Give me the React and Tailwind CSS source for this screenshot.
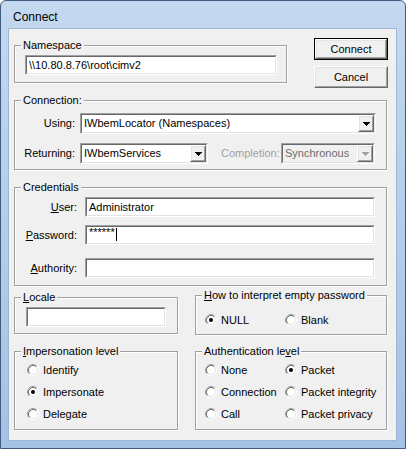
import React from 'react';

const Sunken = ({ className = '', inner = 'bg-white', children }) => (
  <div className={`border border-t-[#a0a0a0] border-l-[#a0a0a0] border-r-white border-b-white ${className}`}>
    <div className={`h-full border border-t-[#696969] border-l-[#696969] border-r-[#e3e3e3] border-b-[#e3e3e3] ${inner}`}>
      {children}
    </div>
  </div>
);

const Raised = ({ className = '', children }) => (
  <div className={`border border-t-white border-l-white border-r-[#696969] border-b-[#696969] bg-[#f0f0f0] ${className}`}>
    <div className="h-full border border-t-[#e3e3e3] border-l-[#e3e3e3] border-r-[#a0a0a0] border-b-[#a0a0a0] flex items-center justify-center">
      {children}
    </div>
  </div>
);

const Arrow = ({ disabled }) => (
  <svg width="7" height="4" viewBox="0 0 7 4" shapeRendering="crispEdges">
    <g fill={disabled ? '#a0a0a0' : '#000'}>
      <rect x="0" y="0" width="7" height="1" />
      <rect x="1" y="1" width="5" height="1" />
      <rect x="2" y="2" width="3" height="1" />
      <rect x="3" y="3" width="1" height="1" />
    </g>
  </svg>
);

const Combo = ({ className, text, disabled }) => (
  <Sunken className={`h-[21px] ${className}`} inner={disabled ? 'bg-[#f0f0f0] flex' : 'bg-white flex'}>
    <div className={`flex-1 pl-[2px] leading-[17px] whitespace-nowrap overflow-hidden ${disabled ? 'text-[#6d6d6d]' : ''}`}>{text}</div>
    <Raised className="w-[16px] h-full">
      <Arrow disabled={disabled} />
    </Raised>
  </Sunken>
);

const Edit = ({ className, children }) => (
  <Sunken className={`h-[20px] ${className}`}>
    <div className="pl-[2px] leading-[16px] whitespace-nowrap">{children}</div>
  </Sunken>
);

const Group = ({ label, className = '', children }) => (
  <div className={`relative border border-[#a0a0a0] shadow-[inset_1px_1px_0_#fff,1px_1px_0_#fff] ${className}`}>
    <div className="absolute left-[6px] -top-[8px] bg-[#f0f0f0] px-[2px] leading-[14px] whitespace-nowrap">{label}</div>
    {children}
  </div>
);

const Radio = ({ checked, label }) => (
  <div className="flex items-center h-[22px]">
    <svg width="12" height="12" viewBox="0 0 12 12" className="shrink-0">
      <circle cx="6" cy="6" r="5" fill="#fff" />
      <path d="M2.11 9.89A5.5 5.5 0 0 1 9.89 2.11" fill="none" stroke="#a0a0a0" />
      <path d="M9.89 2.11A5.5 5.5 0 0 1 2.11 9.89" fill="none" stroke="#fff" />
      <path d="M2.82 9.18A4.5 4.5 0 0 1 9.18 2.82" fill="none" stroke="#696969" />
      <path d="M9.18 2.82A4.5 4.5 0 0 1 2.82 9.18" fill="none" stroke="#e3e3e3" />
      {checked && <circle cx="6" cy="6" r="2" fill="#000" />}
    </svg>
    <span className="ml-[4px] whitespace-nowrap">{label}</span>
  </div>
);

export default function App() {
  return (
    <div className="w-[406px] h-[449px] font-['Liberation_Sans',Arial,sans-serif] text-[11px] text-black">
      <div className="w-full h-full border border-[#3f5b7d] rounded-t-[6px] bg-gradient-to-b from-[#c4d8ef] to-[#a4c2e6] flex flex-col pl-[7px] pr-[8px] pb-[7px]">
        <div className="h-[27px] pl-[5px] pt-[9px] text-[12px] leading-[15px]">Connect</div>
        <div className="w-[389px] h-[413px] border border-[#9fb6d2] bg-[#f0f0f0] pl-[5px] pt-[9px]">
          {/* Namespace + buttons */}
          <div className="flex items-start w-[374px]">
            <Group label="Namespace" className="mt-[7px] w-[273px] h-[38px] pl-[10px] pt-[9px]">
              <Edit className="w-[252px]">\\10.80.8.76\root\cimv2</Edit>
            </Group>
            <div className="ml-auto flex flex-col gap-[6px]">
              <div className="border border-black w-[74px] h-[22px]">
                <Raised className="h-full">Connect</Raised>
              </div>
              <Raised className="w-[74px] h-[22px]">Cancel</Raised>
            </div>
          </div>

          {/* Connection */}
          <Group label="Connection:" className="mt-[12px] w-[373px] h-[70px] pt-[12px]">
            <div className="flex items-center">
              <div className="w-[60px] text-right">Using:</div>
              <Combo className="ml-[5px] w-[296px]" text="IWbemLocator (Namespaces)" />
            </div>
            <div className="flex items-center mt-[9px]">
              <div className="w-[60px] text-right">Returning:</div>
              <Combo className="ml-[5px] w-[128px]" text="IWbemServices" />
              <div className="ml-[13px] w-[60px] text-[#a0a0a0]">Completion:</div>
              <Combo className="w-[94px]" text="Synchronous" disabled />
            </div>
          </Group>

          {/* Credentials */}
          <Group label="Credentials" className="mt-[17px] w-[373px] h-[99px] pt-[9px]">
            <div className="flex items-center">
              <div className="w-[62px] text-right"><u>U</u>ser:</div>
              <Edit className="ml-[8px] w-[290px]">Administrator</Edit>
            </div>
            <div className="flex items-center mt-[8px]">
              <div className="w-[62px] text-right"><u>P</u>assword:</div>
              <Edit className="ml-[8px] w-[290px]">
                <span className="flex items-start h-[16px]">
                  <span className="text-[11px] leading-[10px]">******</span>
                  <span className="ml-[1px] mt-[1px] w-[1px] h-[13px] bg-black" />
                </span>
              </Edit>
            </div>
            <div className="flex items-center mt-[13px]">
              <div className="w-[62px] text-right"><u>A</u>uthority:</div>
              <Edit className="ml-[8px] w-[290px]" />
            </div>
          </Group>

          {/* Locale + empty password */}
          <div className="flex items-start mt-[9px]">
            <Group label={<><u>L</u>ocale</>} className="mt-[2px] w-[164px] h-[37px] pl-[11px] pt-[9px]">
              <Edit className="w-[140px]" />
            </Group>
            <Group label={<><u>H</u>ow to interpret empty password</>} className="ml-[17px] w-[192px] h-[40px] pl-[9px] pt-[13px]">
              <div className="flex">
                <div className="w-[80px]"><Radio checked label="NULL" /></div>
                <Radio label="Blank" />
              </div>
            </Group>
          </div>

          {/* Impersonation + authentication */}
          <div className="flex items-start mt-[16px]">
            <Group label={<><u>I</u>mpersonation level</>} className="w-[164px] h-[79px] pl-[12px] pt-[7px]">
              <Radio label="Identify" />
              <Radio checked label="Impersonate" />
              <Radio label="Delegate" />
            </Group>
            <Group label={<>Authentication le<u>v</u>el</>} className="ml-[17px] w-[192px] h-[79px] pl-[9px] pt-[7px]">
              <div className="flex">
                <div className="w-[80px]">
                  <Radio label="None" />
                  <Radio label="Connection" />
                  <Radio label="Call" />
                </div>
                <div>
                  <Radio checked label="Packet" />
                  <Radio label="Packet integrity" />
                  <Radio label="Packet privacy" />
                </div>
              </div>
            </Group>
          </div>
        </div>
      </div>
    </div>
  );
}
